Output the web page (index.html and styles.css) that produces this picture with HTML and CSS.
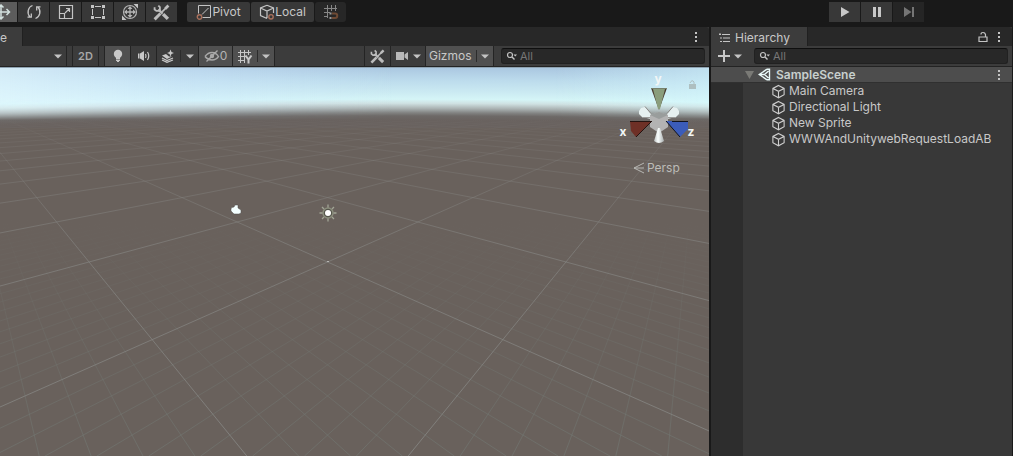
FILE: index.html
```html
<!DOCTYPE html>
<html lang="en">
<head>
<meta charset="utf-8">
<title>SampleScene</title>
<link rel="stylesheet" href="styles.css">
</head>
<body>
<svg class="defs" width="0" height="0" aria-hidden="true">
  <symbol id="i-cube" viewBox="0 0 16 16"><path d="M8 1.500 14 4.700v6.800L8 14.700 2 11.500V4.700zM2 4.700l6 3.100 6-3.100M8 7.800v6.900" fill="none" stroke="#cecece" stroke-width="1.150"/></symbol>
  <symbol id="i-caret" viewBox="0 0 8 5"><path d="M0 .5h8L4 4.500z" fill="#c4c4c4"/></symbol>
  <symbol id="i-dots" viewBox="0 0 4 12"><path d="M1 1h2v2H1zM1 5h2v2H1zM1 9h2v2H1z" fill="#c4c4c4"/></symbol>
  <symbol id="i-search" viewBox="0 0 12 10"><circle cx="4" cy="4" r="2.500" fill="none" stroke="#c4c4c4" stroke-width="1.200"/><path d="m6 6 2.500 2.500" stroke="#c4c4c4" stroke-width="1.400"/><path d="M7.500 3.500h3.500l-1.750 2z" fill="#c4c4c4"/></symbol>
  <symbol id="i-tools" viewBox="0 0 16 16"><g fill="none" stroke="#bcbcbc"><path d="m5 5 4 4" stroke-width="2.200"/><path d="m9.500 9.500 4.500 4.500" stroke-width="3.200"/><path d="M1.500 3v2.200L3.200 6.500h2.300L6.500 5.200V3L5 1.500" stroke-width="1.700"/><path d="M1.500 14.500 7 9" stroke-width="2.800"/><path d="m8.500 7.500 4-4" stroke-width="1.600"/><path d="m11.500 4.500 3-3" stroke-width="2.600"/></g></symbol>
  <symbol id="i-lock" viewBox="0 0 10 12"><path d="M1 6h8v4.500H1z" fill="none" stroke="#c4c4c4" stroke-width="1.200"/><path d="M3 3.500Q3 1.500 5 1.500t2.500 2V6" fill="none" stroke="#c4c4c4" stroke-width="1.200"/></symbol>
</svg>

<header class="topbar">
  <div class="group">
    <button class="tool tool-cut on" aria-label="Move"><svg width="16" height="16" viewBox="-1 -8 16 16"><path d="M-8 0H8M0-7V7M-2.500-4.500 0-7l2.500 2.500M-2.500 4.500 0 7l2.500-2.500M5.500-3 8.500 0 5.500 3" fill="none" stroke="#d2e0de" stroke-width="1.500"/></svg></button>
    <button class="tool" aria-label="Rotate"><svg width="16" height="16" viewBox="0 0 16 16"><path d="M6.500 1.500C2 3 .5 9 4 13M1.500 13.200h3.800V9.500M9.500 14.500C14 13 15.500 7 12 3M14.500 2.800h-3.800V6.500" fill="none" stroke="#c4c4c4" stroke-width="1.300"/></svg></button>
    <button class="tool" aria-label="Scale"><svg width="16" height="16" viewBox="0 0 16 16"><path d="M1.500 1.500h13v13h-13zM1.500 9.500h5v5M7 9l4.500-4.500M8 4.500h3.500V8" fill="none" stroke="#c4c4c4" stroke-width="1.200"/></svg></button>
    <button class="tool" aria-label="Rect"><svg width="16" height="16" viewBox="0 0 16 16"><path d="M5 2.500h6M5 13.500h6M2.500 5v6M13.500 5v6" stroke="#c4c4c4"/><path d="M1 1h3v3H1zM12 1h3v3h-3zM1 12h3v3H1zM12 12h3v3h-3z" fill="#c4c4c4"/></svg></button>
    <button class="tool" aria-label="Transform"><svg width="18" height="18" viewBox="0 0 18 18"><circle cx="9" cy="9" r="6.500" fill="none" stroke="#b4b4b4" stroke-width="1.200"/><path d="M4 9h10M9 4v10" stroke="#b4b4b4" stroke-width="1.300"/><path d="M6.500 6 9 3l2.500 3zM6.500 12 9 15l2.500-3zM6 6.500 3 9l3 2.500zM12 6.500 15 9l-3 2.500z" fill="#b4b4b4"/><path d="M12.500 1H17v4.500zM1 12.500V17h4.500z" fill="#c4c4c4"/></svg></button>
    <button class="tool" aria-label="Custom tools"><svg width="17" height="17"><use href="#i-tools"/></svg></button>
  </div>
  <div class="group">
    <button class="handle"><svg width="16" height="16" viewBox="0 0 16 16"><path d="M2.500 9.500v-8h12v12h-8M6 10.500l6.500-6.500" fill="none" stroke="#c4c4c4"/><circle cx="3.500" cy="13" r="2.200" fill="none" stroke="#a8705c" stroke-width="1.400"/></svg><span>Pivot</span></button>
    <button class="handle"><svg width="16" height="16" viewBox="0 0 16 16"><path d="M8 1.200 14.500 4v5M8 14.500 1.500 11.500V4L8 1.200M1.500 4 8 7l6.500-3M8 7v7" fill="none" stroke="#c4c4c4" stroke-width="1.200"/><circle cx="12" cy="12.800" r="2.200" fill="none" stroke="#a8705c" stroke-width="1.400"/></svg><span>Local</span></button>
  </div>
  <button class="snap" disabled aria-label="Grid snapping"><svg width="16" height="16" viewBox="0 0 16 16"><path d="M1 4.500h13M1 8.500h6M1 12.500h4M4.500 1v13M8.500 1v6M12.500 1v6" stroke="#868686" fill="none"/><path d="M9 9.500h3a2.100 2.100 0 0 1 0 4.500H9" fill="none" stroke="#6e4a34" stroke-width="2"/><path d="M6.500 8.500h2v2h-2zM6.500 13h2v2h-2z" fill="#999"/></svg></button>
  <div class="group play">
    <button class="tool" aria-label="Play"><svg width="12" height="12" viewBox="0 0 12 12"><path d="M2 1v10l8.500-5z" fill="#c8c8c8"/></svg></button>
    <button class="tool" aria-label="Pause"><svg width="12" height="12" viewBox="0 0 12 12"><path d="M2 1h3v10H2zM7 1h3v10H7z" fill="#c8c8c8"/></svg></button>
    <button class="tool off" disabled aria-label="Step"><svg width="12" height="12" viewBox="0 0 12 12"><path d="M1 1v10l7.500-5zM9 1h2v10H9z" fill="#757575"/></svg></button>
  </div>
</header>

<main class="workspace">
  <section class="panel scene-panel">
    <div class="tabs">
      <button class="tab tab-cut">e</button>
      <button class="icon-btn" aria-label="Scene options"><svg width="4" height="12"><use href="#i-dots"/></svg></button>
    </div>
    <div class="toolbar scene-tools">
      <button class="tb draw" aria-label="Draw mode"><svg width="8" height="5"><use href="#i-caret"/></svg></button>
      <button class="tb two-d">2D</button>
      <div class="tbgroup">
        <button class="tb on" aria-label="Lighting"><svg width="10" height="14" viewBox="0 0 10 14"><circle cx="5" cy="5" r="4.200" fill="#c8c8c8"/><path d="M3 8h4v2H3zM3 10.500h4V12H6v1H4v-1H3z" fill="#c8c8c8"/></svg></button>
        <button class="tb" aria-label="Audio"><svg width="14" height="12" viewBox="0 0 14 12"><path d="M1 3.500h1.500v5H1zM3 3.500 7 1v10L3 8.500z" fill="#c8c8c8"/><path d="M8.500 4q1 2 0 4M10.500 2q2.500 4 0 8" fill="none" stroke="#c8c8c8" stroke-width="1.200"/></svg></button>
        <button class="tb split" aria-label="Effects"><svg width="14" height="14" viewBox="0 0 14 14"><path d="M1 6.500 5 5l3 2.500h3L6 10z" fill="#c8c8c8"/><path d="M1 9l5 2.500L12 9M1 11l5 2.300 6-2.300" fill="none" stroke="#c8c8c8" stroke-width="1.300"/><path d="m9.500.5 1 2.500 2.500 1-2.500 1-1 2.500-1-2.500L6 4l2.500-1z" fill="#c8c8c8"/></svg><i></i><svg width="8" height="5"><use href="#i-caret"/></svg></button>
        <button class="tb on hidden-count"><svg width="16" height="14" viewBox="0 0 16 14"><path d="M1 7.500Q4 3.500 8 3.500t6.500 4Q12 11 8 11T1 7.500M2.500 12.500 13.500 1.500" fill="none" stroke="#a8a8a8" stroke-width="1.400"/><circle cx="8" cy="7" r="2.200" fill="#a8a8a8"/></svg><span>0</span></button>
        <button class="tb on split" aria-label="Grid"><svg width="16" height="15" viewBox="0 0 16 15"><path d="M1 3.500h13M1 7.500h8M1 11.500h6M3.500 1v13M7.500 1v13M11.500 1v5" stroke="#c8c8c8" fill="none"/><path d="m8.500 6.500 3 4 3-4M11.500 10v4.500" fill="none" stroke="#c8c8c8" stroke-width="2"/></svg><i></i><svg width="8" height="5"><use href="#i-caret"/></svg></button>
      </div>
      <div class="tbgroup right">
        <button class="tb" aria-label="Component tools"><svg width="15" height="15"><use href="#i-tools"/></svg></button>
        <button class="tb cam" aria-label="Camera"><svg width="14" height="10" viewBox="0 0 14 10"><path d="M1 1h8v8H1zM9.500 3.500 13 1v8L9.500 6.500z" fill="#b8b8b8"/></svg><svg width="8" height="5"><use href="#i-caret"/></svg></button>
        <button class="tb on gizmos"><span>Gizmos</span><i></i><svg width="8" height="5"><use href="#i-caret"/></svg></button>
      </div>
      <label class="search scene-search"><svg width="12" height="10"><use href="#i-search"/></svg><input type="text" placeholder="All" aria-label="Search scene"></label>
    </div>
    <div class="viewport">
      <svg class="world" viewBox="0 0 709 388" preserveAspectRatio="xMinYMin slice" aria-hidden="true">
        <defs>
          <radialGradient id="sky" gradientUnits="userSpaceOnUse" cx="390" cy="16052" fx="390" fy="16052" fr="16000" r="16052">
            <stop offset="0" stop-color="#69625f"/><stop offset=".08" stop-color="#6d6967"/><stop offset=".14" stop-color="#828382"/><stop offset=".22" stop-color="#a9b1b1"/><stop offset=".32" stop-color="#cfe1e2"/><stop offset=".4" stop-color="#d5f5f7"/><stop offset=".54" stop-color="#cbeaf2"/><stop offset=".77" stop-color="#bcdbec"/><stop offset="1" stop-color="#abc8e1"/>
          </radialGradient>
          <linearGradient id="fade" gradientUnits="userSpaceOnUse" x1="0" y1="50" x2="0" y2="388">
            <stop offset="0" stop-color="#999" stop-opacity="0"/><stop offset=".15" stop-color="#858582" stop-opacity=".3"/><stop offset=".4" stop-color="#858582" stop-opacity=".65"/><stop offset="1" stop-color="#858582" stop-opacity=".85"/>
          </linearGradient>
          <linearGradient id="fine" gradientUnits="userSpaceOnUse" x1="0" y1="150" x2="0" y2="388">
            <stop offset="0" stop-color="#727873" stop-opacity="0"/><stop offset=".5" stop-color="#727873" stop-opacity=".3"/><stop offset="1" stop-color="#727873" stop-opacity=".6"/>
          </linearGradient>
        </defs>
        <rect width="709" height="388" fill="#69615c"/>
        <rect width="709" height="60" fill="url(#sky)"/>
        <path id="minor" fill="none" stroke="url(#fine)"/>
        <path id="major" fill="none" stroke="url(#fade)"/>
        <path d="M231 141q0-2 3-2l1-2h3v3l3 2v3l-2 1h-5l-3-3z" fill="#f4ffff" stroke="#4e4b48" stroke-width=".5"/>
        <circle cx="328" cy="145" r="5" fill="#56564c" stroke="#8a8d7c" stroke-width="1.500"/>
        <path d="M328 136.500v3M328 150.500v3M319.500 145h3M333.500 145h3M322 139l2 2M334 139l-2 2M322 151l2-2M334 151l-2-2" stroke="#a2a596" stroke-width="1.300"/>
        <circle cx="328" cy="145" r="3" fill="#fff"/>
        <path d="M327 193.500h2" stroke="#b8b6b4"/>
      </svg>
      <div class="glow"></div>
      <svg class="gizmo" width="97" height="112" viewBox="0 0 97 112">
        <defs><linearGradient id="cone"><stop offset="0" stop-color="#b8bcbc"/><stop offset=".4" stop-color="#fafffe"/><stop offset="1" stop-color="#a8adad"/></linearGradient></defs>
        <path d="M39 20h16l-8 22z" fill="#4a3c32"/><path d="M41 21h12l-5 20h-2z" fill="#8a9d7c"/><path d="M39 20.500h16" stroke="#77806c"/>
        <path d="M27 43l2-3 4-1 6 7v5l-9-2-3-3z" fill="#e6f0f0"/><path d="M33 38.500l6 7" stroke="#8a8886"/><path d="M30 49.500h8" stroke="#9a9a98"/>
        <path d="M67 43l-2-3-4-1-6 7v5l9-2 3-3z" fill="#e6f0f0"/><path d="M61 38.500l-6 7" stroke="#8a8886"/><path d="M64 49.500h-8" stroke="#9a9a98"/>
        <path d="M38 47l9-3 9 3v12l-9 6-9-6z" fill="#b3b3b3"/><path d="M38 47l9-3 9 3-9 4z" fill="#999d9c"/>
        <path d="M46 60h2l4 13q-5 4-10 0z" fill="url(#cone)"/>
        <path d="M18 53h22L24 69l-5-6z" fill="#6e3026"/><path d="M18 53.500h22M40 53 24 69" stroke="#241310"/>
        <path d="M54 53h22v8l-8 8z" fill="#3b5cba"/><path d="M60 53.500h16M54 53l14 16" stroke="#10131f"/>
        <g class="axis"><text x="46" y="15">y</text><text x="11" y="68">x</text><text x="79" y="68">z</text></g>
        <path d="M77 16h7v5h-7z" fill="#aebfc0"/><path d="M78 15q2-4 4-1v2" fill="none" stroke="#aebfc0"/>
        <path d="m32 95-10 5 10 5M22 100h10" fill="none" stroke="#b8b8b4"/>
        <text class="persp" x="35" y="104">Persp</text>
      </svg>
    </div>
  </section>

  <aside class="panel hierarchy">
    <div class="tabs">
      <button class="tab"><svg width="12" height="10" viewBox="0 0 12 10"><path d="M3 1.500h8M4 5h7M4 8.500h7M0 1.500h2M1 5h2M1 8.500h2M1 0v2" stroke="#c4c4c4" fill="none"/></svg><span>Hierarchy</span></button>
      <button class="icon-btn lock" aria-label="Lock"><svg width="10" height="12"><use href="#i-lock"/></svg></button>
      <button class="icon-btn" aria-label="Hierarchy options"><svg width="4" height="12"><use href="#i-dots"/></svg></button>
    </div>
    <div class="toolbar hier-tools">
      <button class="add" aria-label="Create"><svg width="12" height="12" viewBox="0 0 12 12"><path d="M6 0v12M0 6h12" stroke="#c8c8c8" stroke-width="2"/></svg><svg width="8" height="5"><use href="#i-caret"/></svg></button>
      <label class="search"><svg width="12" height="10"><use href="#i-search"/></svg><input type="text" placeholder="All" aria-label="Search hierarchy"></label>
    </div>
    <div class="scene-row">
      <svg width="9" height="8" viewBox="0 0 9 8"><path d="M0 0h9L4.500 8z" fill="#7a7a76"/></svg>
      <svg width="13" height="13" viewBox="0 0 13 13"><path d="M9 1.200 1.200 6.500 9 11.800M9 1.200h2.500V5M9 11.800h2.500V8M11.500 4.500v4M1.500 6.500h5L10.500 3M6.500 6.500l4 3.500" fill="none" stroke="#eafafa" stroke-width="1.400"/></svg>
      <strong>SampleScene</strong>
      <button class="icon-btn" aria-label="Scene menu"><svg width="4" height="12"><use href="#i-dots"/></svg></button>
    </div>
    <ul class="tree">
      <li><svg width="15" height="15"><use href="#i-cube"/></svg>Main Camera</li>
      <li><svg width="15" height="15"><use href="#i-cube"/></svg>Directional Light</li>
      <li><svg width="15" height="15"><use href="#i-cube"/></svg>New Sprite</li>
      <li><svg width="15" height="15"><use href="#i-cube"/></svg>WWWAndUnitywebRequestLoadAB</li>
    </ul>
  </aside>
</main>
<script src="grid.js"></script>
</body>
</html>
```

FILE: styles.css
```css
* { box-sizing: border-box; }
body {
  margin: 0;
  min-height: 100vh;
  display: flex;
  flex-direction: column;
  background: #191919;
  color: #c8c8c8;
  font: 12px/16px Inter, "Liberation Sans", sans-serif;
}
button {
  display: flex;
  align-items: center;
  justify-content: center;
  margin: 0;
  padding: 0;
  border: 0;
  background: none;
  color: inherit;
  font: inherit;
}
svg { display: block; flex: none; }
.defs { position: absolute; }

.topbar { display: flex; height: 27px; padding-top: 2px; align-items: flex-start; }
.group { display: flex; gap: 1px; margin-right: 10px; }
.tool { width: 31px; height: 20px; background: #383838; }
.tool.on { background: #5c5c5c; }
.tool-cut { width: 17px; justify-content: flex-start; }
.handle { width: 63px; height: 20px; background: #383838; border-radius: 2px; }
.group + .group { margin-right: 1px; }
.snap { width: 31px; height: 20px; background: #272727; border-radius: 3px; }
.topbar .play { margin-left: auto; margin-right: 89px; }
.tool.off { background: #252525; }

.workspace { flex: 1; display: flex; gap: 2px; padding-right: 1px; }
.panel { display: flex; flex-direction: column; min-width: 0; background: #383838; }
.scene-panel { flex: 1; }
.hierarchy { width: 301px; flex: none; }

.tabs { display: flex; height: 19px; background: #282828; align-items: stretch; border-radius: 0 3px 0 0; }
.tab {
  padding: 3px 17px 0 8px;
  margin-right: auto;
  gap: 4px;
  background: #3c3c3c;
  border-right: 1px solid #202020;
}
.tab-cut { width: 23px; padding: 3px 0 0; justify-content: flex-start; }
.icon-btn { width: 16px; margin-right: 5px; }
.icon-btn.lock { margin-right: 0; }

.toolbar { display: flex; height: 21px; background: #3c3c3c; border-bottom: 1px solid #232323; align-items: center; }
.tb {
  height: 20px;
  min-width: 26px;
  border-right: 1px solid #242424;
}
.tb.on { background: #505050; }
.tbgroup { display: flex; border-left: 1px solid #242424; margin-left: 5px; }
.draw { width: 67px; justify-content: flex-end; padding-right: 4px; border-right-color: #242424; }
.two-d { width: 27px; margin-left: 5px; border-left: 1px solid #242424; font-size: 11px; font-weight: 600; color: #a8a8a8; }
.split { width: 42px; justify-content: space-between; padding: 0 4px; }
.split i, .gizmos i { width: 1px; height: 12px; background: #2c2c2c; }
.hidden-count { width: 34px; color: #b4b4b4; }
.right { margin-left: auto; }
.cam { width: 35px; gap: 4px; }
.gizmos { width: 68px; justify-content: space-between; padding: 0 4px 0 3px; }

.search {
  display: flex;
  flex: 1;
  height: 16px;
  align-items: center;
  gap: 2px;
  padding: 0 5px 0 4px;
  margin-right: 4px;
  background: #282828;
  border: 1px solid #212121;
  border-top-color: #0f0f0f;
  border-radius: 3px;
}
.search input {
  flex: 1;
  min-width: 0;
  height: 14px;
  padding: 0;
  border: 0;
  outline: 0;
  background: none;
  color: #c8c8c8;
  font: 11px/14px Inter, "Liberation Sans", sans-serif;
}
.search input::placeholder { color: #777; opacity: 1; }
.scene-search { flex: 0 0 204px; margin-left: 7px; }

.viewport { flex: 1; position: relative; overflow: hidden; background: #69615c; border-top: 1px solid #8fa3b2; }
.world { position: absolute; inset: 0; width: 100%; height: 100%; }
.glow {
  position: absolute;
  inset: 0 0 auto;
  height: 52px;
  background: linear-gradient(90deg, rgba(226, 248, 255, .75), rgba(210, 236, 255, .45) 26%, rgba(210, 236, 255, 0) 56%, rgba(210, 245, 255, 0) 78%, rgba(214, 250, 255, .5));
  -webkit-mask-image: linear-gradient(#000 60%, transparent);
  mask-image: linear-gradient(#000 60%, transparent);
}
.gizmo { position: absolute; top: 0; right: 0; font-family: Inter, "Liberation Sans", sans-serif; }
.axis { font-size: 12px; font-weight: 700; fill: #f2f6f6; text-anchor: middle; }
.persp { font-size: 12px; fill: #bcbcb8; }

.hier-tools { padding-left: 7px; }
.add { gap: 4px; margin-right: 12px; }
.scene-row {
  display: flex;
  height: 16px;
  align-items: center;
  gap: 4px;
  padding-left: 34px;
  background: #4d4d4d;
  border-bottom: 1px solid #303030;
}
.scene-row strong { flex: 1; margin-left: 1px; font-weight: 600; color: #c8d0ce; }
.tree {
  flex: 1;
  margin: 0;
  padding: 0 0 0 60px;
  list-style: none;
  background: linear-gradient(90deg, #2d2d2d 32px, #383838 32px);
}
.tree li { display: flex; height: 16px; align-items: center; gap: 3px; }
```

FILE: grid.js
```js
// Ground grid: one-point projection of a plane seen along its diagonal.
// Both line families meet at a vanishing point on the horizon.
const CENTER = 327.5, HORIZON = 29, SPREAD = 372.6, DROP = 515.6, DISTANCE = 3.125;

function line(k, top) {
  const slope = SPREAD * (2 * k + DISTANCE) / DROP;
  const at = y => slope * (y - HORIZON) - SPREAD;
  const bottom = 388;
  return [1, -1].map(s =>
    `M${(CENTER + s * at(top)).toFixed(1)} ${top}L${(CENTER + s * at(bottom)).toFixed(1)} ${bottom}`
  ).join("");
}

let major = "", minor = "";
for (let k = -1; k <= 24; k++) major += line(k, 50);
for (let n = -15; n <= 40; n++) if (n % 10) minor += line(n / 10, 150);
document.getElementById("major").setAttribute("d", major);
document.getElementById("minor").setAttribute("d", minor);
```
